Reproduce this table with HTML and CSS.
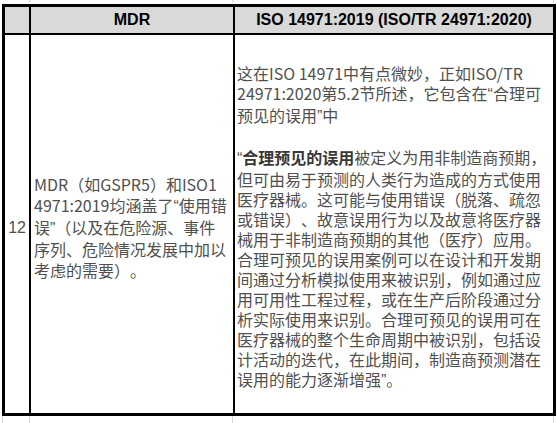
FILE: index.html
```html
<!DOCTYPE html>
<html lang="zh-CN">
<head>
<meta charset="utf-8">
<title>MDR vs ISO 14971</title>
<link rel="stylesheet" href="styles.css">
</head>
<body>
<div class="page">
  <div class="strip strip-top">
    <span class="g g0"></span><span class="g g1"></span><span class="g g2"></span><span class="g g3"></span>
  </div>
  <div class="sheet">
    <div class="cell head c1"></div>
    <div class="cell head c2">MDR</div>
    <div class="cell head c3">ISO 14971:2019 (ISO/TR 24971:2020)</div>
    <div class="cell body c1"><span class="num">12</span></div>
    <div class="cell body c2">
      <p class="txt t2">MDR（如GSPR5）和ISO1<br>4971:2019均涵盖了<span class="q">“</span>使用错<br>误<span class="q">”</span>（以及在危险源、事件<br>序列、危险情况发展中加以<br>考虑的需要）。</p>
    </div>
    <div class="cell body c3">
      <p class="txt t3">这在ISO 14971中有点微妙，正如ISO/TR<br>24971:2020第5.2节所述，它包含在<span class="q">“</span>合理可<br>预见的误用<span class="q">”</span>中<br>&nbsp;<br><span class="q">“</span><b>合理预见的误用</b>被定义为用非制造商预期，<br>但可由易于预测的人类行为造成的方式使用<br>医疗器械。这可能与使用错误（脱落、疏忽<br>或错误）、故意误用行为以及故意将医疗器<br>械用于非制造商预期的其他（医疗）应用。<br>合理可预见的误用案例可以在设计和开发期<br>间通过分析模拟使用来被识别，例如通过应<br>用可用性工程过程，或在生产后阶段通过分<br>析实际使用来识别。合理可预见的误用可在<br>医疗器械的整个生命周期中被识别，包括设<br>计活动的迭代，在此期间，制造商预测潜在<br>误用的能力逐渐增强<span class="q">”</span>。</p>
    </div>
  </div>
  <div class="strip strip-bottom">
    <span class="g b0"></span><span class="g b1"></span><span class="g b2"></span><span class="g b3"></span>
  </div>
</div>
</body>
</html>
```

FILE: styles.css
```css
html, body {
  margin: 0;
  padding: 0;
  background: #ffffff;
}

.page {
  width: 557px;
  height: 423px;
  overflow: hidden;
  display: flex;
  flex-direction: column;
}

.strip {
  display: grid;
  grid-template-columns: 30px 203px 321px;
}

.strip-top {
  height: 4px;
}

.strip-bottom {
  height: 8px;
  grid-template-columns: 3px 27px 203px 321px;
}

.g {
  display: block;
  box-sizing: border-box;
  border-right: 1px solid #d4d4d4;
}

.g3 {
  border-right: none;
}

.b3 {
  border-right: 1px solid #d4d4d4;
}

.sheet {
  box-sizing: border-box;
  width: 554px;
  margin-left: 2px;
  border: 3px solid #000000;
  display: grid;
  grid-template-columns: 26px 204px 318px;
  grid-template-rows: 28px 378px;
}

.cell {
  box-sizing: border-box;
  min-width: 0;
}

.c1, .c2 {
  border-right: 2px solid #000000;
}

.head {
  background: #d9d9d9;
  border-bottom: 2px solid #000000;
  font-family: "Liberation Sans", Arial, sans-serif;
  font-weight: bold;
  font-size: 16px;
  color: #000000;
  display: flex;
  align-items: center;
  justify-content: center;
  white-space: nowrap;
}

.body {
  display: flex;
  align-items: center;
  padding-top: 7px;
  font-family: "Noto Sans CJK SC", "Noto Sans", sans-serif;
  font-size: 16px;
  color: #505050;
  text-spacing-trim: space-all;
}

.body.c1 {
  justify-content: flex-end;
  padding-right: 3px;
}

.num {
  font-family: "Liberation Sans", Arial, sans-serif;
  font-size: 16px;
  line-height: 21px;
}

.txt {
  margin: 0;
  white-space: nowrap;
}

.t2 {
  line-height: 21px;
  padding-left: 3px;
}

.t3 {
  line-height: 20px;
  padding-left: 2px;
}

.txt b {
  font-weight: bold;
  color: #383838;
}

.q {
  font-family: "Liberation Sans", Arial, sans-serif;
}
```
